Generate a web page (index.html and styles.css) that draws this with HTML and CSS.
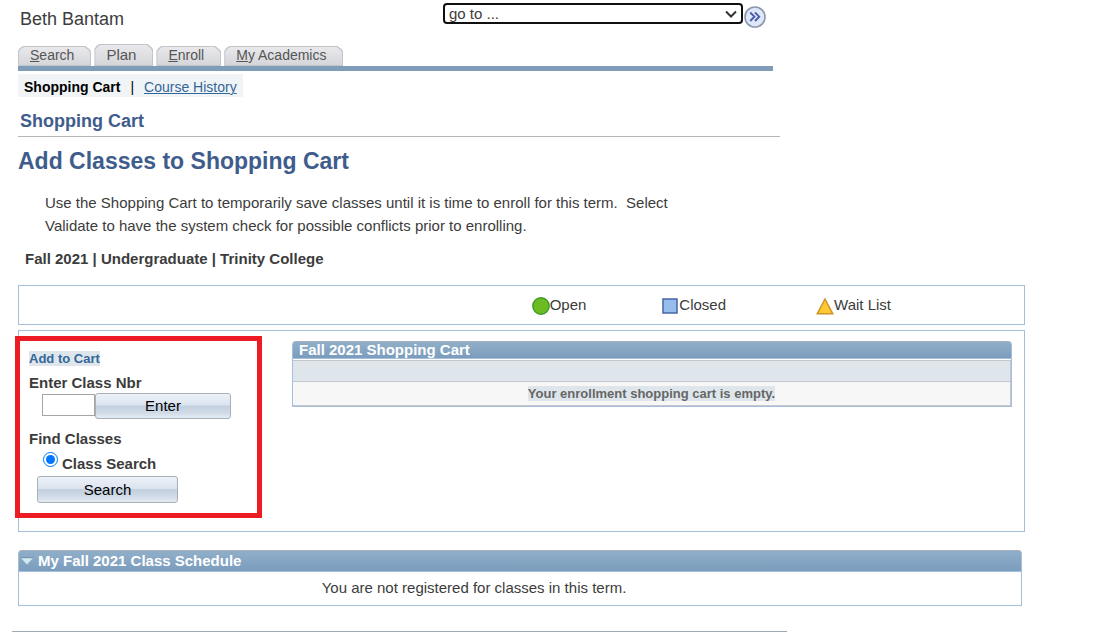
FILE: index.html
```html
<!DOCTYPE html>
<html lang="en">
<head>
<meta charset="utf-8">
<title>Shopping Cart</title>
<link rel="stylesheet" href="styles.css">
</head>
<body>
<div class="page">
  <header class="top">
    <span class="student">Beth Bantam</span>
    <form class="goto">
      <span class="goto-field">
        <select class="goto-select" aria-label="Go to"><option>go to ...</option></select>
        <svg class="goto-arrow" viewBox="0 0 12 8" aria-hidden="true"><path d="M1 1.5 6 6.5 11 1.5" fill="none" stroke="#333" stroke-width="2"/></svg>
      </span>
      <button class="goto-button" type="button" aria-label="Go">
        <svg viewBox="0 0 22 22" aria-hidden="true">
          <circle cx="11" cy="11" r="10" fill="#dfe8fa" stroke="#8c96aa" stroke-width="1.6"/>
          <path d="M6.2 6.5 10.4 10.7 6.2 15M11 6.5 15.2 10.7 11 15" fill="none" stroke="#4a5da8" stroke-width="1.9"/>
        </svg>
      </button>
    </form>
  </header>

  <nav class="tabs">
    <a class="tab" href="#"><span class="tab-label"><u>S</u>earch</span></a>
    <a class="tab tab-active" href="#"><span class="tab-label">Plan</span></a>
    <a class="tab" href="#"><span class="tab-label"><u>E</u>nroll</span></a>
    <a class="tab" href="#"><span class="tab-label"><u>M</u>y Academics</span></a>
  </nav>
  <nav class="subnav">
    <strong class="subnav-current">Shopping Cart</strong>
    <span>|</span>
    <a class="subnav-link" href="#">Course History</a>
  </nav>

  <h1 class="section-title">Shopping Cart</h1>
  <h2 class="page-title">Add Classes to Shopping Cart</h2>
  <p class="intro">Use the Shopping Cart to temporarily save classes until it is time to enroll for this term.&nbsp; Select Validate to have the system check for possible conflicts prior to enrolling.</p>
  <p class="term">Fall 2021 | Undergraduate | Trinity College</p>

  <ul class="legend">
    <li class="legend-item"><svg class="legend-icon" viewBox="0 0 18 18" aria-hidden="true"><circle cx="9" cy="9" r="8.2" fill="#6cbb22" stroke="#3f9a24" stroke-width="1.4"/></svg>Open</li>
    <li class="legend-item"><svg class="legend-icon" viewBox="0 0 18 18" aria-hidden="true"><rect x="2" y="2" width="14" height="14" fill="#96bdec" stroke="#4766a4" stroke-width="1.5"/></svg>Closed</li>
    <li class="legend-item legend-wait"><svg class="legend-icon" viewBox="0 0 18 18" aria-hidden="true"><path d="M9 2 16.8 16.8H1.2z" fill="#ffc933" stroke="#d09328" stroke-width="1.5"/></svg>Wait List</li>
  </ul>

  <main class="cart">
    <form class="add">
      <h3 class="add-title"><span class="highlight">Add to Cart</span></h3>
      <label class="add-label" for="class-nbr">Enter Class Nbr</label>
      <div class="add-entry">
        <input class="add-input" id="class-nbr" type="text">
        <button class="button button-enter" type="button">Enter</button>
      </div>
      <h3 class="add-label">Find Classes</h3>
      <div class="add-choice">
        <input class="add-radio" id="class-search" type="radio" name="find" checked>
        <label class="add-choice-label" for="class-search">Class Search</label>
      </div>
      <button class="button button-search" type="button">Search</button>
    </form>

    <section class="cart-list">
      <h3 class="bar cart-bar">Fall 2021 Shopping Cart</h3>
      <table class="cart-table">
        <thead><tr><th class="cart-head"></th></tr></thead>
        <tbody><tr><td class="cart-empty"><span class="highlight">Your enrollment shopping cart is empty.</span></td></tr></tbody>
      </table>
    </section>
  </main>

  <section class="schedule">
    <h3 class="bar schedule-bar">
      <svg class="schedule-arrow" viewBox="0 0 12 8" aria-hidden="true"><path d="M0 1H12L6 7.5z" fill="#cfeaf0"/><path d="M0 .7H12" stroke="#7190a5"/></svg>
      My Fall 2021 Class Schedule
    </h3>
    <p class="schedule-text">You are not registered for classes in this term.</p>
  </section>
  <hr class="end">
</div>
</body>
</html>
```
FILE: styles.css
```css
* { box-sizing: border-box; }
body {
  margin: 0;
  background: #fff;
  color: #3c3c3c;
  font: 15px/18px "Liberation Sans", Arial, sans-serif;
}
h1, h2, h3, p, ul { margin: 0; padding: 0; }
svg { display: block; }

.page { padding: 3px 84px 0 18px; }

.top {
  display: flex;
  align-items: flex-start;
  justify-content: space-between;
  max-width: 748px;
  height: 41px;
}
.student { padding: 5px 2px; font-size: 18px; line-height: 22px; }
.goto { display: flex; gap: 1px; }
.goto-field { position: relative; width: 300px; }
.goto-select {
  display: block;
  width: 100%;
  height: 21px;
  padding: 0 4px;
  border: 2px solid #101010;
  border-radius: 4px;
  appearance: none;
  background: #fff;
  color: #3c3c3c;
  font: 15px/17px "Liberation Sans", Arial, sans-serif;
}
.goto-arrow {
  position: absolute;
  top: 7px;
  right: 6px;
  width: 12px;
  height: 8px;
  pointer-events: none;
}
.goto-button {
  width: 22px;
  height: 22px;
  margin-top: 3px;
  padding: 0;
  border: 0;
  background: none;
}

.tabs {
  display: flex;
  align-items: flex-end;
  gap: 3px;
  max-width: 755px;
  height: 27px;
  border-bottom: 5px solid #7f9db9;
}
.tab {
  height: 20px;
  padding: 1px;
  background: #c2c5ca;
  clip-path: polygon(0 5px, 2px 2px, 5px 0, calc(100% - 6px) 0, calc(100% - 2px) 3px, 100% 6px, 100% 100%, 0 100%);
  color: #555;
  font-size: 14px;
  line-height: 17px;
  text-decoration: none;
}
.tab-label {
  display: block;
  height: 100%;
  padding: 0 16px 0 11px;
  background: linear-gradient(#e9e9ec, #d5d6da);
  clip-path: polygon(0 5px, 2px 2px, 5px 0, calc(100% - 6px) 0, calc(100% - 2px) 3px, 100% 6px, 100% 100%, 0 100%);
}
.tab-active { height: 22px; font-size: 15px; line-height: 20px; }

.subnav {
  display: flex;
  gap: 10px;
  width: fit-content;
  margin-top: 3px;
  padding: 4px 6px 1px;
  background: #f0f4f6;
  color: #000;
  font-size: 14px;
}
.subnav-link { color: #336699; }

.section-title {
  max-width: 762px;
  margin-top: 13px;
  padding: 0 2px 3px;
  border-bottom: 1px solid #b5b5b5;
  color: #3e5c8c;
  font-size: 18px;
  line-height: 23px;
}
.page-title {
  margin-top: 10px;
  color: #3e5c8c;
  font-size: 23px;
  line-height: 28px;
}
.intro {
  max-width: 690px;
  margin-top: 16px;
  padding: 0 27px;
  line-height: 23px;
}
.term { padding: 13px 7px; font-weight: bold; }

.legend {
  display: flex;
  justify-content: flex-end;
  gap: 75px;
  margin-top: 4px;
  padding: 10px 133px 9px 0;
  border: 1px solid #a3bfdb;
  list-style: none;
}
.legend-item { display: flex; }
.legend-wait { padding-left: 15px; }
.legend-icon { width: 18px; height: 18px; margin-top: 1px; }

.cart {
  display: flex;
  align-items: flex-start;
  gap: 30px;
  margin-top: 5px;
  padding: 5px 12px 13px 0;
  border: 1px solid #a3bfdb;
}
.add {
  flex: none;
  width: 247px;
  margin-left: -4px;
  padding: 10px 9px;
  border: 5px solid #ed1c24;
}
.highlight { background: #dee6ec; }
.add-title { color: #336699; font-size: 13px; line-height: 16px; }
.add-label {
  display: block;
  margin-top: 7px;
  font-size: 15px;
  font-weight: bold;
}
.add-entry { display: flex; margin: 1px 0 11px 13px; }
.add-input {
  width: 53px;
  height: 22px;
  margin-top: 1px;
  border: 1px solid #a5a5a5;
}
.button {
  height: 26px;
  padding: 0;
  border: 1px solid #a9b0b8;
  border-radius: 3px;
  background: linear-gradient(#edf2f8, #dbe4ef 46%, #c3cfdf 50%, #d2dce8 80%, #e4ebf3);
  color: #000;
  font: 15px/18px "Liberation Sans", Arial, sans-serif;
}
.button-enter { width: 136px; }
.button-search { display: block; width: 141px; height: 27px; margin: 3px 0 0 8px; }
.add-choice { display: flex; gap: 4px; margin: 4px 0 0 14px; }
.add-radio { width: 15px; height: 15px; margin: 0; accent-color: #0075ff; }
.add-choice-label { padding-top: 3px; font-weight: bold; }

.bar {
  border: 1px solid #a3bfdb;
  border-top-color: #a9aebb;
  border-radius: 4px 4px 0 0;
  background: linear-gradient(#8fafc8, #7c9cbe);
  color: #fff;
  font-size: 15px;
}
.cart-list { flex: 1; margin-top: 5px; }
.cart-bar { padding: 0 6px; line-height: 16px; }
.cart-table {
  width: 100%;
  padding-top: 1px;
  border: 1px solid #a3bfdb;
  border-top: 0;
  border-spacing: 0;
}
.cart-head {
  height: 22px;
  padding: 0;
  border: 1px solid #c4c8cc;
  border-left: 0;
  background: #dee6ec;
}
.cart-empty {
  height: 24px;
  padding: 1px 0 0;
  border: 1px solid #c4c8cc;
  border-width: 0 1px 1px 0;
  background: #f7f7f7;
  color: #666;
  font-size: 13px;
  font-weight: bold;
  line-height: 16px;
  text-align: center;
}

.schedule { margin: 18px 3px 0 0; }
.schedule-bar {
  display: flex;
  align-items: center;
  gap: 5px;
  padding: 1px 2px;
}
.schedule-arrow { width: 12px; height: 8px; }
.schedule-text {
  padding: 7px 92px 8px 0;
  border: 1px solid #a3bfdb;
  border-top: 0;
  text-align: center;
}
.end {
  max-width: 775px;
  margin: 25px 0 0 -6px;
  border: 0;
  border-top: 1px solid #a0a8b8;
}
```
